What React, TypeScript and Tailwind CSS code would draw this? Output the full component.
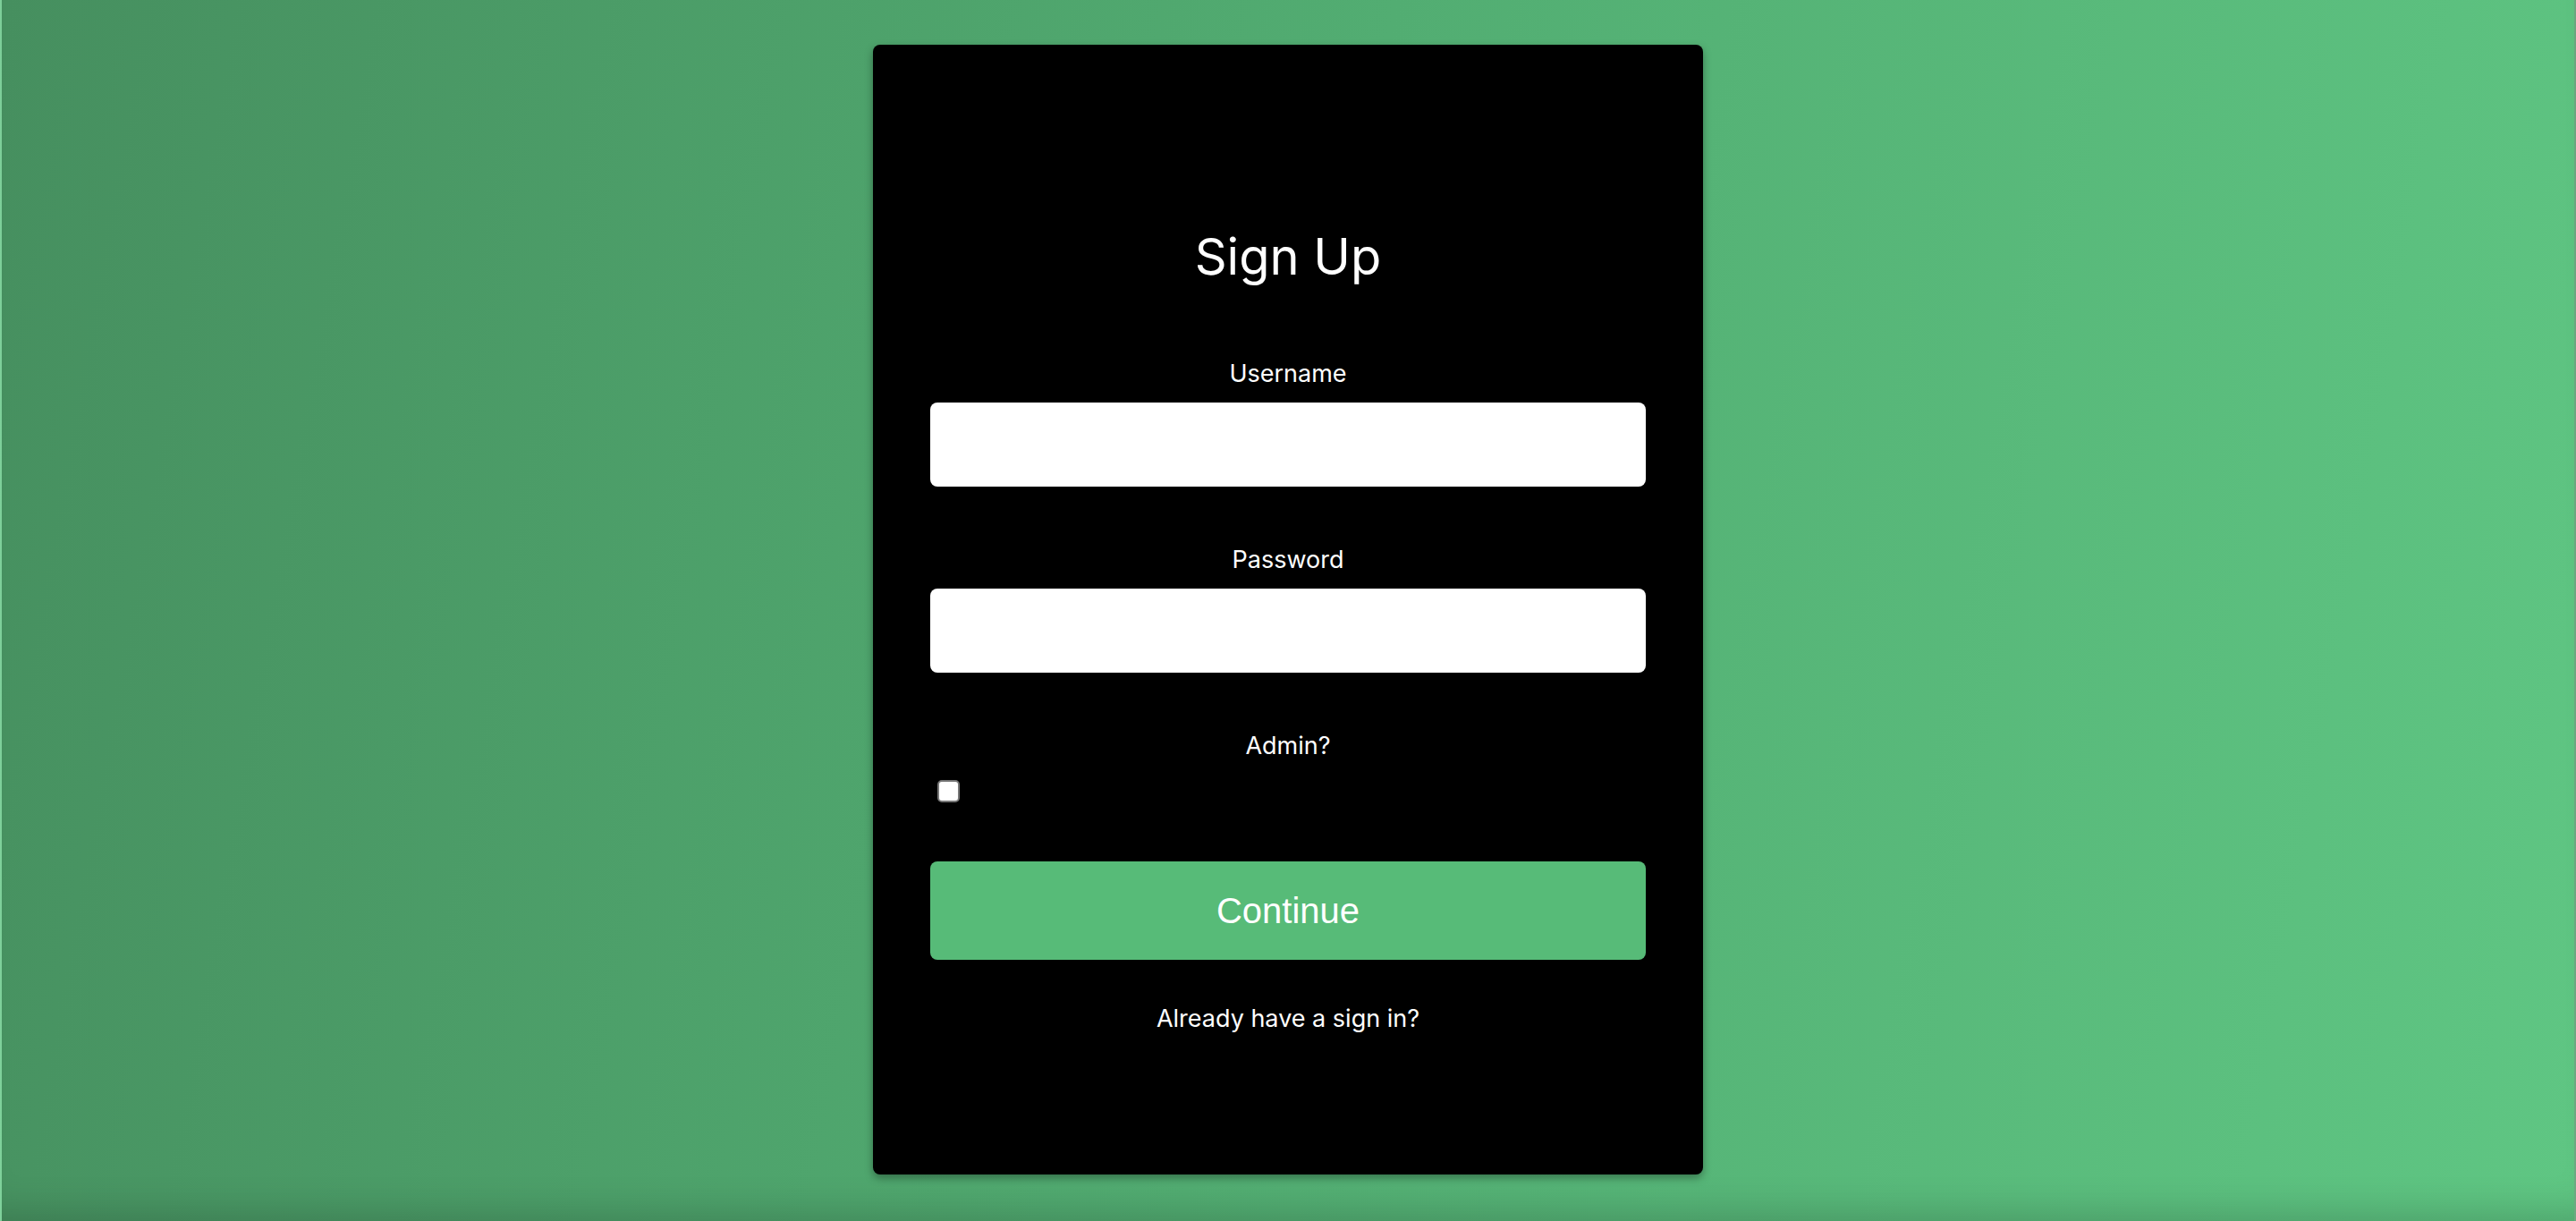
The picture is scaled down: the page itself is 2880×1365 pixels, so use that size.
import { useState } from "react";

const INTER = "font-['Inter','Noto_Sans',sans-serif]";

function Field({ label, type }: { label: string; type: string }) {
  return (
    <div className="flex flex-col items-center">
      <label className={`${INTER} text-[27px] leading-[34px] text-white`}>{label}</label>
      <input
        type={type}
        className="mt-[15px] h-[94px] w-full rounded-[8px] bg-white px-4 text-[28px] text-black outline-none"
      />
    </div>
  );
}

export default function App() {
  const [admin, setAdmin] = useState(false);

  return (
    <div className="relative h-[1365px] w-full overflow-hidden border-x-2 border-white/20 bg-[linear-gradient(100deg,#468f5f_0%,#52ad72_50%,#5fc683_100%)] shadow-[inset_0_-40px_40px_-30px_rgba(0,0,0,0.18)]">
      <div className="mx-auto mt-[50px] flex h-[1263px] w-[928px] flex-col rounded-[8px] bg-black px-[64px] pt-[203px] shadow-[0_4px_10px_rgba(0,0,0,0.35)]">
        <h1 className={`${INTER} text-center text-[56px] font-normal leading-[68px] text-white`}>Sign Up</h1>

        <div className="mt-[80px]">
          <Field label="Username" type="text" />
        </div>
        <div className="mt-[65px]">
          <Field label="Password" type="password" />
        </div>

        <div className="mt-[65px] flex flex-col">
          <span className={`${INTER} text-center text-[27px] leading-[34px] text-white`}>Admin?</span>
          <input
            type="checkbox"
            checked={admin}
            onChange={(e) => setAdmin(e.target.checked)}
            className="ml-[8px] mt-[21px] h-[25px] w-[25px] appearance-none rounded-[5px] border-2 border-[#767676] bg-white checked:bg-[#57bb78]"
          />
        </div>

        <button
          type="button"
          className="mt-[66px] flex h-[110px] w-full items-center justify-center rounded-[8px] bg-[#57bb78] font-['Liberation_Sans',Arial,sans-serif] text-[40px] text-white"
        >
          Continue
        </button>

        <p className={`${INTER} mt-[49px] text-center text-[27px] leading-[34px] text-white`}>
          Already have a sign in?
        </p>
      </div>
    </div>
  );
}
